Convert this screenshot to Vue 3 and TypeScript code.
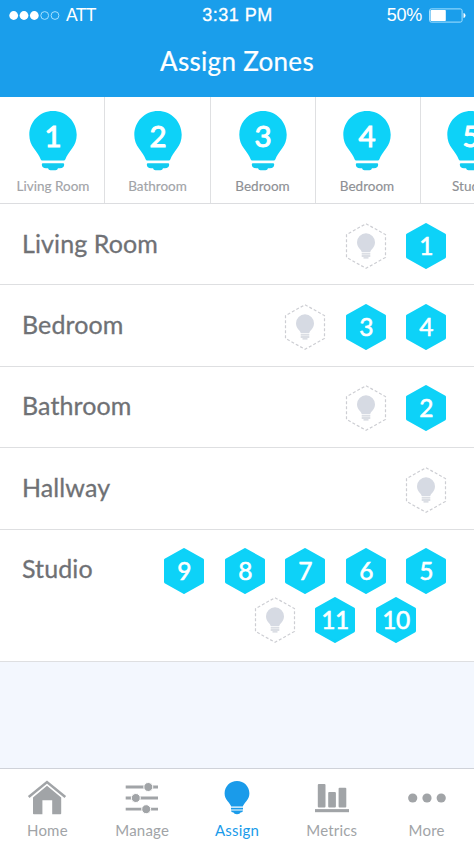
<script setup lang="ts">
interface Bulb {
  id: number
  room: string
  tone: string
}

interface Zone {
  name: string
  // null marks the empty slot a bulb can be dropped on
  lines: (number | null)[][]
}

const bulbs: Bulb[] = [
  { id: 1, room: 'Living Room', tone: 'first' },
  { id: 2, room: 'Bathroom', tone: 'second' },
  { id: 3, room: 'Bedroom', tone: 'strong' },
  { id: 4, room: 'Bedroom', tone: 'strong fourth' },
  { id: 5, room: 'Studio', tone: 'strong last' },
]

const zones: Zone[] = [
  { name: 'Living Room', lines: [[null, 1]] },
  { name: 'Bedroom', lines: [[null, 3, 4]] },
  { name: 'Bathroom', lines: [[null, 2]] },
  { name: 'Hallway', lines: [[null]] },
  { name: 'Studio', lines: [[9, 8, 7, 6, 5], [null, 11, 10]] },
]

const tabs: string[] = ['Home', 'Manage', 'Assign', 'Metrics', 'More']
const activeTab = 'Assign'
</script>

<template>
  <div class="screen">
    <header class="header">
      <div class="status">
        <div class="carrier">
          <svg class="signal" width="52" height="10" viewBox="0 0 52 10">
            <circle cx="4.700" cy="4.500" r="4.400" fill="#fff" />
            <circle cx="15" cy="4.500" r="4.400" fill="#fff" />
            <circle cx="25.300" cy="4.500" r="4.400" fill="#fff" />
            <circle cx="35.700" cy="4.500" r="3.900" class="ring" />
            <circle cx="46" cy="4.500" r="3.900" class="ring" />
          </svg>
          <span class="network">ATT</span>
        </div>
        <div class="clock">3:31 PM</div>
        <div class="power">
          <span class="percent">50%</span>
          <svg width="38" height="15" viewBox="0 0 38 15">
            <rect x="1.500" y="0.900" width="32.600" height="13.200" rx="1.800" class="ring" />
            <rect x="2.500" y="2" width="15.300" height="11" rx="0.800" fill="#fff" />
            <path d="M35.500 5q2 .4 2 2.500T35.500 10z" fill="#fff" />
          </svg>
        </div>
      </div>
      <h1 class="title">Assign Zones</h1>
    </header>

    <section class="strip">
      <div v-for="b in bulbs" :key="b.id" class="bulb-cell" :class="b.tone">
        <svg class="bulb" width="48" height="60" viewBox="0 0 48 60">
          <path
            d="M24 0C10.900 0 .3 10.600 .3 23.700C.3 29 2 33.500 5 37.500C8 41.500 10.600 45.500 11.500 48C12 49.300 12.600 49.500 13.600 49.500H34.400C35.400 49.500 36 49.300 36.500 48C37.400 45.500 40 41.500 43 37.500C46 33.500 47.700 29 47.700 23.700C47.700 10.600 37.100 0 24 0Z"
            fill="#0dd2f8"
          />
          <path
            d="M14 52.300H34Q35.300 52.300 35.200 53.700Q35 57 31 57.300H29Q28.500 59.300 26.500 59.300H21.500Q19.500 59.300 19 57.300H17Q13 57 12.800 53.700Q12.700 52.300 14 52.300Z"
            fill="#12cbf0"
          />
          <text x="24" y="36" class="bulb-number">{{ b.id }}</text>
        </svg>
        <span class="bulb-room">{{ b.room }}</span>
      </div>
    </section>

    <main class="zones">
      <section v-for="z in zones" :key="z.name" class="zone" :class="{ tall: z.lines.length > 1 }">
        <h2 class="zone-name">{{ z.name }}</h2>
        <div class="slots">
          <div v-for="(line, i) in z.lines" :key="i" class="slot-line">
            <svg v-for="(n, j) in line" :key="j" class="slot" width="42" height="48" viewBox="0 0 42 48">
              <template v-if="n !== null">
                <path
                  d="M21 2.200L39.800 12.900V35.100L21 45.800L2.200 35.100V12.900Z"
                  fill="#0dd2f8"
                  stroke="#0dd2f8"
                  stroke-width="2.400"
                  stroke-linejoin="round"
                />
                <text x="21" y="32.500" class="slot-number">{{ n }}</text>
              </template>
              <template v-else>
                <path class="empty" d="M21 1.700L40.500 12.600V35.400L21 46.300L1.500 35.400V12.600Z" />
                <path
                  d="M21 11.300a9 9 0 0 0-9 9c0 3 1.200 4.900 2.800 6.600 1.100 1.200 1.700 2 2 3.300h8.400c.3-1.300.9-2.100 2-3.300 1.600-1.700 2.800-3.600 2.800-6.600a9 9 0 0 0-9-9z"
                  fill="#d6dae3"
                />
                <path d="M16.700 31.800h8.600M16.700 34h8.600M18.500 35.900h5" stroke="#cfd3dc" stroke-width="1.300" />
              </template>
            </svg>
          </div>
        </div>
      </section>
    </main>

    <nav class="tabs">
      <div v-for="t in tabs" :key="t" class="tab" :class="{ active: t === activeTab }">
        <svg class="tab-icon" width="40" height="37" viewBox="0 0 40 37">
          <g v-if="t === 'Home'">
            <path d="M1.700 19L20 4L38.300 19" fill="none" stroke="currentColor" stroke-width="2.500" />
            <path
              d="M20 7.700L34.200 19.500V35.500Q34.200 36.300 33.400 36.300H25.200V22.300H15.400V36.300H6.800Q6 36.300 6 35.500V19.500Z"
              fill="currentColor"
            />
          </g>
          <g v-else-if="t === 'Manage'" fill="currentColor">
            <path
              d="M3.700 9H36M3.700 20H36M3.700 31.200H36"
              fill="none"
              stroke="currentColor"
              stroke-width="2.800"
            />
            <circle cx="26.300" cy="9" r="4.500" class="knob" />
            <circle cx="13.800" cy="20" r="4.500" class="knob" />
            <circle cx="24.200" cy="31.200" r="4.500" class="knob" />
          </g>
          <g v-else-if="t === 'Assign'" fill="currentColor">
            <path
              d="M20 3C13 3 7.600 8.500 7.600 15.300C7.600 18.500 8.700 20.800 10.500 23C12.300 25.300 13.600 26.700 14.200 28.500H25.800C26.400 26.700 27.700 25.300 29.500 23C31.300 20.800 32.400 18.500 32.400 15.300C32.400 8.500 27 3 20 3Z"
            />
            <path d="M14 29.700H26V31.400H14ZM14 32.500H26Q26 34.500 23.500 34.600Q23 36.300 20 36.300T16.500 34.600Q14 34.500 14 32.500Z" />
          </g>
          <g v-else-if="t === 'Metrics'" fill="currentColor">
            <rect x="5.800" y="6" width="7.700" height="23.600" rx="1" />
            <rect x="16.200" y="14" width="7.700" height="15.600" rx="1" />
            <rect x="26.600" y="9.800" width="7.700" height="19.800" rx="1" />
            <rect x="3" y="31.100" width="34" height="3.100" />
          </g>
          <g v-else fill="currentColor">
            <circle cx="5.700" cy="20" r="4.600" />
            <circle cx="20" cy="20" r="4.600" />
            <circle cx="34.200" cy="20" r="4.600" />
          </g>
        </svg>
        <span class="tab-label">{{ t }}</span>
      </div>
    </nav>
  </div>
</template>

<style>
body {
  margin: 0;
}
</style>

<style scoped>
.screen {
  width: 474px;
  height: 841px;
  display: flex;
  flex-direction: column;
  overflow: hidden;
  background: #f3f7fe;
  font-family: Lato, sans-serif;
}

.header {
  flex: none;
  height: 97px;
  background: #1a9eeb;
  color: #fff;
}

.status {
  display: grid;
  grid-template-columns: 1fr auto 1fr;
  align-items: center;
  height: 31px;
  padding: 0 8px 0 9px;
  font: 18px/31px 'Liberation Sans', Arial, sans-serif;
}

.carrier,
.power {
  display: flex;
  align-items: center;
}

.carrier {
  gap: 5px;
}

.network {
  font-size: 17.500px;
  letter-spacing: -0.6px;
}

.power {
  justify-content: flex-end;
  gap: 6px;
}

.percent {
  letter-spacing: -0.3px;
}

.clock {
  font-size: 18px;
  letter-spacing: 0.5px;
  -webkit-text-stroke: 0.3px #fff;
}

.ring {
  fill: none;
  stroke: #a5e0ff;
  stroke-width: 1;
}

.title {
  margin: 0;
  font-size: 26px;
  font-weight: 400;
  line-height: 61px;
  letter-spacing: 0.3px;
  text-align: center;
  -webkit-text-stroke: 0.2px #fff;
}

.strip {
  flex: none;
  display: grid;
  grid-template-columns: 105px 106px 105px 105px 105px;
  height: 106px;
  border-bottom: 1px solid #dcdde0;
  background: #fff;
}

.bulb-cell {
  box-sizing: border-box;
  display: flex;
  flex-direction: column;
  align-items: center;
  padding-top: 14px;
  border-right: 1px solid #dfe0e2;
  color: #a2a4a8;
}

.bulb-cell.first {
  padding-left: 2px;
}

.bulb-cell.strong {
  padding-right: 1px;
  color: #8e9094;
}

.bulb-cell.fourth {
  padding-right: 2px;
}

.bulb-cell.last {
  padding-right: 4px;
}

.bulb {
  flex: none;
}

.bulb-number,
.slot-number {
  fill: #fff;
  stroke: #fff;
  font-weight: 400;
  text-anchor: middle;
}

.bulb-number {
  font-size: 29.500px;
  stroke-width: 1;
}

.bulb-room {
  margin-top: 5.500px;
  font-size: 13.500px;
  line-height: 18px;
  white-space: nowrap;
  -webkit-text-stroke: 0.15px currentColor;
}

.zones {
  flex: none;
  background: #fff;
}

.zone {
  box-sizing: border-box;
  display: flex;
  justify-content: space-between;
  height: 81.400px;
  padding: 17.700px 27px 0 22px;
  border-bottom: 1px solid #dedfe1;
}

.zone.tall {
  height: 132px;
}

.zone-name {
  margin: 0;
  color: #6f7175;
  font-size: 25px;
  font-weight: 400;
  line-height: 43px;
  letter-spacing: 0.1px;
  -webkit-text-stroke: 0.3px currentColor;
}

.slots {
  display: flex;
  flex-direction: column;
  gap: 1px;
}

.slot-line {
  display: flex;
  justify-content: flex-end;
  gap: 18.500px;
}

/* The second line sits half a slot to the left, as in a honeycomb */
.slot-line + .slot-line {
  padding-right: 30.250px;
}

.slot {
  display: block;
}

.slot-number {
  font-size: 24.500px;
  letter-spacing: -0.5px;
  stroke-width: 0.6;
}

.empty {
  fill: none;
  stroke: #cdced3;
  stroke-width: 1.200;
  stroke-dasharray: 3 2;
}

.tabs {
  flex: none;
  display: grid;
  grid-template-columns: repeat(5, 1fr);
  box-sizing: border-box;
  height: 73px;
  margin-top: auto;
  border-top: 1px solid #cfd2d9;
  background: #fff;
}

.tab {
  display: flex;
  flex-direction: column;
  align-items: center;
  padding-top: 9px;
  color: #a1a4a7;
}

.tab.active {
  color: #1a9bea;
}

.tab-icon {
  flex: none;
}

.knob {
  stroke: #fff;
  stroke-width: 1;
}

.tab-label {
  margin-top: 6px;
  font-size: 15px;
  line-height: 18px;
  letter-spacing: 0.2px;
}
</style>
